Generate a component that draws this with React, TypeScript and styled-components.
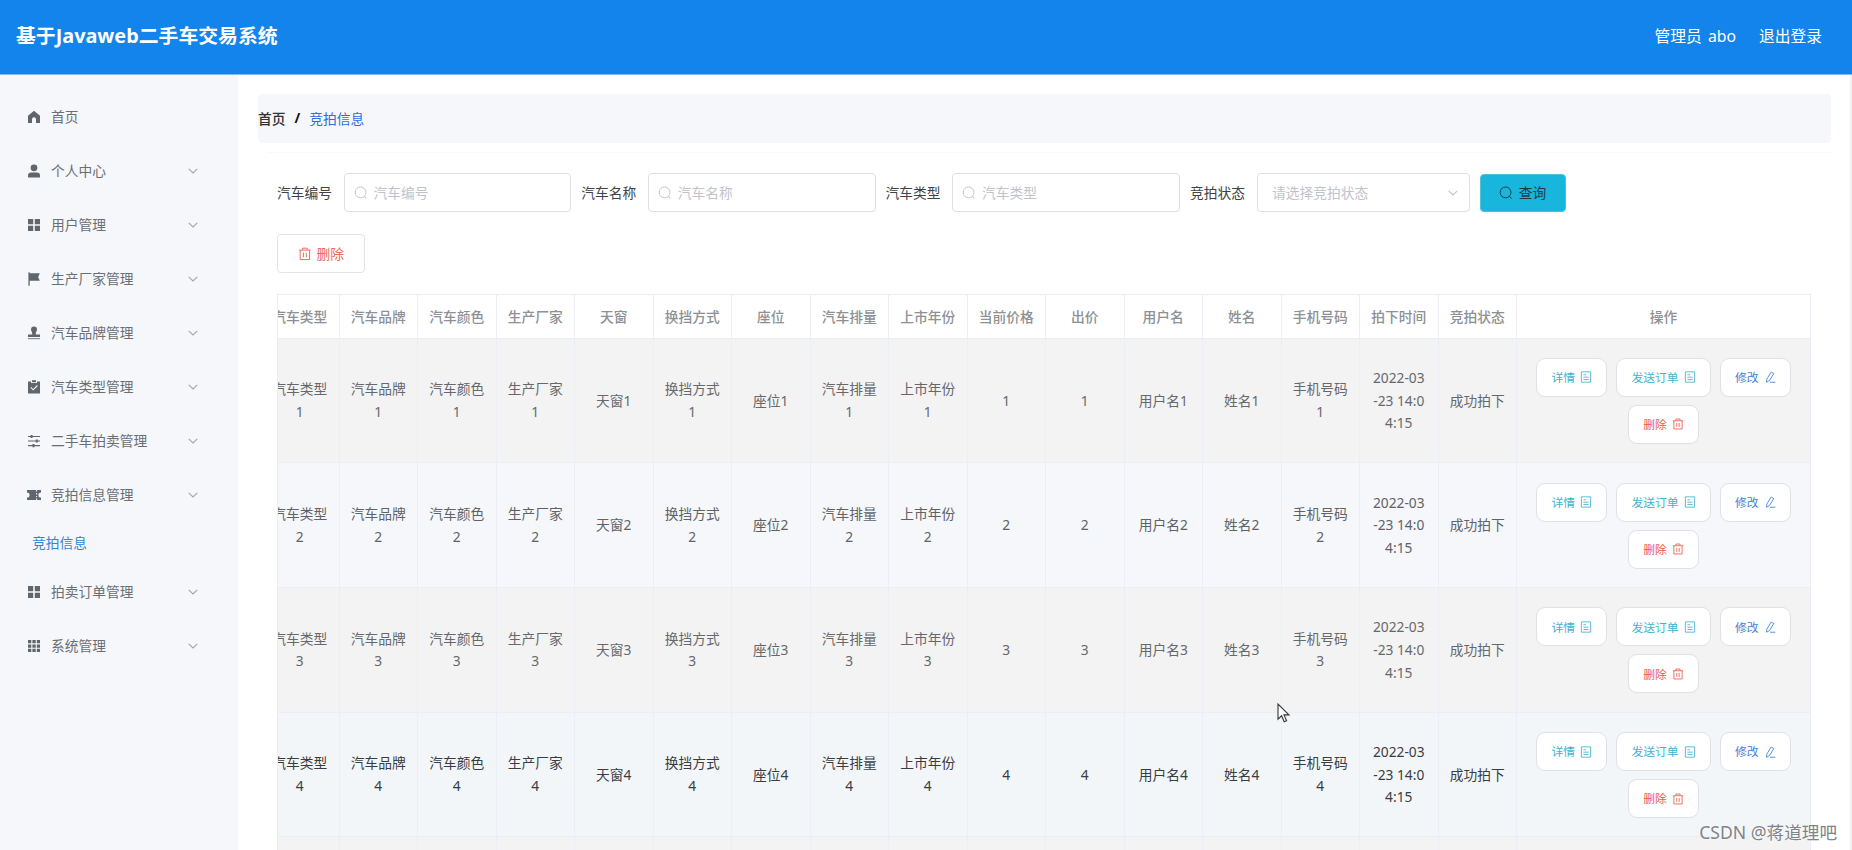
import React from "react";
import styled, { createGlobalStyle } from "styled-components";

const GlobalStyle = createGlobalStyle`
  * { box-sizing: border-box; }
  body {
    margin: 0;
    background: #fff;
    font-family: "Noto Sans", "Noto Sans CJK SC", sans-serif;
    font-size: 13.75px;
    overflow: hidden;
  }
`;

const Page = styled.div`
  position: relative;
  width: 100%;
  height: 850px;
  display: flex;
  flex-direction: column;
  overflow: hidden;
`;

const Header = styled.header`
  flex: none;
  height: 75px;
  padding: 0 30px 3px 16px;
  display: flex;
  align-items: center;
  justify-content: space-between;
  background: #1384eb;
  border-bottom: 1px solid #7fbcf3;
  color: #fff;
`;

const Title = styled.h1`
  margin: 0;
  font-size: 19.85px;
  font-weight: 700;
  line-height: 28px;
  white-space: nowrap;
`;

const UserBar = styled.div`
  display: flex;
  gap: 23px;
  font-size: 15.75px;
  line-height: 24px;
  word-spacing: 2px;
`;

const Body = styled.div`
  flex: 1;
  min-height: 0;
  display: flex;
`;

const Sidebar = styled.nav`
  flex: none;
  width: 238px;
  padding-top: 15px;
  background: #f5f7fb;
`;

const MenuItem = styled.div`
  height: 54px;
  padding: 0 38px 0 27px;
  display: flex;
  align-items: center;
  color: #6b6f73;
`;

const MenuLabel = styled.span`
  flex: 1;
  margin-left: 10px;
  line-height: 20px;
`;

const SubItem = styled.div`
  height: 43px;
  padding: 0 0 3px 32px;
  display: flex;
  align-items: center;
  color: #2f86d8;
`;

const Main = styled.main`
  flex: 1;
  min-width: 0;
  padding: 19px 19px 0 20px;
  border-right: 2px solid #f1f1f2;
`;

const Breadcrumb = styled.div`
  height: 49px;
  padding-bottom: 2px;
  display: flex;
  align-items: center;
  border-radius: 4px;
  background: #f5f7fb;
  color: #303133;
  font-weight: 500;
`;

const Slash = styled.span`
  margin: 0 9px;
  color: #111;
  font-weight: 700;
`;

const Current = styled.span`
  color: #2b6fe0;
  font-weight: 400;
`;

const Content = styled.section`
  margin: 9px 0 0 10px;
  padding: 20px 9px 0;
  border-top: 1px solid #fafafa;
`;

const Filters = styled.div`
  display: flex;
  align-items: center;
  height: 39px;
`;

const Field = styled.div`
  display: flex;
  align-items: center;
  gap: 11.7px;
  margin-right: 10px;
  color: #404346;
`;

const Label = styled.label`
  padding-bottom: 2px;
`;

const InputBox = styled.span<{ $width: number; $left: number; $right: number }>`
  width: ${(p) => p.$width}px;
  height: 39px;
  padding: 0 ${(p) => p.$right}px 0 ${(p) => p.$left}px;
  display: flex;
  align-items: center;
  gap: 6px;
  border: 1px solid #dcdfe6;
  border-radius: 4px;
  background: #fff;
  color: #bfc3cb;
`;

const Placeholder = styled.span`
  flex: 1;
  padding-bottom: 2px;
`;

const ButtonText = styled.span`
  padding-bottom: 2px;
`;

const SearchButton = styled.button`
  width: 86px;
  height: 38px;
  padding: 0;
  display: flex;
  align-items: center;
  justify-content: center;
  gap: 6px;
  border: 1px solid #4cc2dc;
  border-radius: 4px;
  background: #18b6dc;
  color: #1c3b46;
  font: inherit;
`;

const DeleteButton = styled.button`
  width: 88px;
  height: 39px;
  margin-top: 22px;
  padding: 0;
  display: flex;
  align-items: center;
  justify-content: center;
  gap: 5px;
  border: 1px solid #e1e3e9;
  border-radius: 4px;
  background: #fff;
  color: #ee6a5c;
  font: inherit;
`;

const TableView = styled.div`
  width: 1534px;
  height: 556px;
  margin-top: 21px;
  overflow: hidden;
  border: 1px solid #ebeef5;
  border-bottom: 0;
`;

const tones = {
  head: { bg: "#ffffff", fg: "#8d9095" },
  grey: { bg: "#f3f3f3", fg: "#66686c" },
  blue: { bg: "#f5f7fb", fg: "#606266" },
  active: { bg: "#f3f6f9", fg: "#3a3c3f" },
};
type Tone = keyof typeof tones;

const Row = styled.div<{ $tone: Tone; $height: number }>`
  display: grid;
  grid-template-columns: repeat(16, 78.5px) 1fr;
  height: ${(p) => p.$height}px;
  margin-left: -17px;
  background: ${(p) => tones[p.$tone].bg};
  color: ${(p) => tones[p.$tone].fg};
  font-weight: ${(p) => (p.$tone === "head" ? 500 : 400)};
`;

const Cell = styled.div`
  display: flex;
  align-items: center;
  justify-content: center;
  padding-top: 1px;
  border-right: 1px solid #ebeef5;
  border-bottom: 1px solid #ebeef5;
  text-align: center;
  line-height: 22.6px;
  white-space: pre-line;
  &:last-child { border-right: 0; }
`;

const Actions = styled.div`
  display: flex;
  flex-wrap: wrap;
  justify-content: center;
  gap: 8px 8.8px;
  padding: 0 10px;
`;

const ActionButton = styled.button<{ $color: string; $wide?: boolean }>`
  width: ${(p) => (p.$wide ? 94.5 : 71.5)}px;
  height: 39px;
  padding: 0;
  display: flex;
  align-items: center;
  justify-content: center;
  gap: 5px;
  border: 1px solid #dfe1e7;
  border-radius: 9px;
  background: #fff;
  color: ${(p) => p.$color};
  font: inherit;
  font-size: 11.8px;
`;

const Svg = styled.svg`
  flex: none;
  display: block;
  overflow: visible;
`;

const Pointer = styled(Svg)`
  position: absolute;
  left: 1277px;
  top: 703px;
`;

const Watermark = styled.div`
  position: absolute;
  right: 15px;
  bottom: 6px;
  font-size: 17.6px;
  line-height: 24px;
  color: #808387;
  text-shadow: 0 0 2px #fff;
  white-space: nowrap;
`;

const menuIcons: Record<string, React.ReactNode> = {
  home: <path d="M7 .8 13 5.8V13H9V9.2a2 2 0 0 0-4 0V13H1V5.8Z" />,
  user: (
    <>
      <circle cx="7" cy="3.8" r="3.4" />
      <path d="M1 13.4v-2.2C1 9.4 2.4 8.6 4 8.6h6c1.6 0 3 .8 3 2.6v2.2Z" />
    </>
  ),
  grid: <path d="M1 1h5.2v5.2H1ZM7.8 1H13v5.2H7.8ZM1 7.8h5.2V13H1ZM7.8 7.8H13V13H7.8Z" />,
  flag: <path d="M1.4.3h1.3v1h10.1L11.2 5l1.6 3.8H2.7v5H1.4Z" />,
  stamp: (
    <>
      <path d="M7 .6a3 3 0 0 1 3 3c0 1.5-1.3 2.2-1.3 4.8H13v2.5H1V8.4h4.3C5.3 5.800 4 5.100 4 3.600a3 3 0 0 1 3-3Z" />
      <path d="M1 12h12v1.200H1Z" opacity="0.7" />
    </>
  ),
  clipboard: (
    <>
      <path d="M1 1.5h3V3h6V1.5h3v12H1Z" />
      <path d="M5 .2h4v2H5Z" />
      <path d="m3.8 7.4 2.4 2.4 4.2-4.3" fill="none" stroke="#f5f7fb" strokeWidth="1.1" />
    </>
  ),
  sliders: (
    <g fill="none" stroke="currentColor" strokeWidth="1.1">
      <path d="M1 2.500h12M1 7h12M1 11.600h12" />
      <path d="M4.600 1v3M9.800 5.500v3M6.500 10v3.200" strokeWidth="2" />
    </g>
  ),
  ticket: <path d="M0 2h9.1v1.4h1V2H14v2.4a2.6 2.6 0 0 0 0 5.2V12h-3.9v-1.4h-1V12H0V9.6a2.6 2.6 0 0 0 0-5.2ZM9.1 5v1.4h1V5ZM9.1 8v1.2h1V8Z" fillRule="evenodd" />,
  nine: <path d="M1 1h3.3v3.3H1ZM5.4 1h3.3v3.3H5.4ZM9.8 1H13v3.3H9.8ZM1 5.4h3.3v3.3H1ZM5.4 5.4h3.3v3.3H5.4ZM9.8 5.4H13v3.3H9.8ZM1 9.8h3.3V13H1ZM5.4 9.8h3.3V13H5.4ZM9.8 9.8H13V13H9.8Z" />,
};

const MenuIcon = ({ name }: { name: string }) => (
  <Svg width="14" height="14" viewBox="0 0 14 14" fill="currentColor" color="#5f666d">
    {menuIcons[name]}
  </Svg>
);

const Chevron = ({ color }: { color: string }) => (
  <Svg width="14" height="14" viewBox="0 0 14 14" fill="none" stroke={color} strokeWidth="1.1">
    <path d="m2.7 4.8 4.3 4.1 4.3-4.1" />
  </Svg>
);

const SearchIcon = () => (
  <Svg width="13.75" height="13.75" viewBox="0 0 14 14" fill="none" stroke="currentColor" strokeWidth="1">
    <circle cx="6.7" cy="6.5" r="5.5" />
    <path d="m10.6 10.5 2.2 2.3" />
  </Svg>
);

const TrashIcon = ({ size }: { size: number }) => (
  <Svg width={size} height={size} viewBox="0 0 14 14" fill="none" stroke="currentColor" strokeWidth="1">
    <path d="M1 3.2h12M4.6 3V1.2h4.8V3M2.2 3.4v9.4h9.6V3.4M5.6 5.8v4.6M8.4 5.8v4.6" />
  </Svg>
);

const DocIcon = () => (
  <Svg width="12" height="12" viewBox="0 0 14 14" fill="none" stroke="currentColor" strokeWidth="1">
    <path d="M1.6 1h10.8v12H1.6ZM4 4.4h3M4 7.2h6M4 10h6" />
  </Svg>
);

const EditIcon = () => (
  <Svg width="12" height="12" viewBox="0 0 14 14" fill="none" stroke="currentColor" strokeWidth="1">
    <path d="m8.4 1.2 3 1.8-5 8.2-3.5 1.9.4-3.7ZM7 13.1h6.3" />
  </Svg>
);

const menuTop = [
  ["home", "首页"],
  ["user", "个人中心"],
  ["grid", "用户管理"],
  ["flag", "生产厂家管理"],
  ["stamp", "汽车品牌管理"],
  ["clipboard", "汽车类型管理"],
  ["sliders", "二手车拍卖管理"],
  ["ticket", "竞拍信息管理"],
];
const menuBottom = [
  ["grid", "拍卖订单管理"],
  ["nine", "系统管理"],
];

const Menu = ({ items }: { items: string[][] }) => (
  <>
    {items.map(([icon, label]) => (
      <MenuItem key={label}>
        <MenuIcon name={icon} />
        <MenuLabel>{label}</MenuLabel>
        {icon !== "home" && <Chevron color="#a0a4ab" />}
      </MenuItem>
    ))}
  </>
);

const columns = [
  "汽车类型", "汽车品牌", "汽车颜色", "生产厂家", "天窗", "换挡方式", "座位", "汽车排量",
  "上市年份", "当前价格", "出价", "用户名", "姓名", "手机号码", "拍下时间", "竞拍状态",
];

const cellText = (column: string, n: number) => {
  if (column === "拍下时间") return "2022-03\n-23 14:0\n4:15";
  if (column === "竞拍状态") return "成功拍下";
  if (column === "当前价格" || column === "出价") return `${n}`;
  return column.length === 4 ? `${column}\n${n}` : `${column}${n}`;
};

const rows: { n: number; tone: Tone }[] = [
  { n: 1, tone: "grey" },
  { n: 2, tone: "blue" },
  { n: 3, tone: "grey" },
  { n: 4, tone: "active" },
  { n: 5, tone: "grey" },
];

const RowActions = () => (
  <Actions>
    <ActionButton $color="#3fb4cf">详情<DocIcon /></ActionButton>
    <ActionButton $color="#3fb4cf" $wide>发送订单<DocIcon /></ActionButton>
    <ActionButton $color="#3f7fd6">修改<EditIcon /></ActionButton>
    <ActionButton $color="#f05a4e">删除<TrashIcon size={12} /></ActionButton>
  </Actions>
);

export default function App() {
  return (
    <Page>
      <GlobalStyle />
      <Header>
        <Title>基于Javaweb二手车交易系统</Title>
        <UserBar>
          <span>管理员 abo</span>
          <span>退出登录</span>
        </UserBar>
      </Header>
      <Body>
        <Sidebar>
          <Menu items={menuTop} />
          <SubItem>竞拍信息</SubItem>
          <Menu items={menuBottom} />
        </Sidebar>
        <Main>
          <Breadcrumb>
            首页<Slash>/</Slash><Current>竞拍信息</Current>
          </Breadcrumb>
          <Content>
            <Filters>
              {["汽车编号", "汽车名称", "汽车类型"].map((label) => (
                <Field key={label}>
                  <Label>{label}</Label>
                  <InputBox $width={227.6} $left={9} $right={9}>
                    <SearchIcon />
                    <Placeholder>{label}</Placeholder>
                  </InputBox>
                </Field>
              ))}
              <Field>
                <Label>竞拍状态</Label>
                <InputBox $width={213} $left={14.5} $right={9}>
                  <Placeholder>请选择竞拍状态</Placeholder>
                  <Chevron color="#c0c4cc" />
                </InputBox>
              </Field>
              <SearchButton><SearchIcon /><ButtonText>查询</ButtonText></SearchButton>
            </Filters>
            <DeleteButton><TrashIcon size={13.75} /><ButtonText>删除</ButtonText></DeleteButton>
            <TableView>
              <Row $tone="head" $height={43.6}>
                {columns.map((c) => <Cell key={c}>{c}</Cell>)}
                <Cell>操作</Cell>
              </Row>
              {rows.map(({ n, tone }) => (
                <Row key={n} $tone={tone} $height={124.7}>
                  {columns.map((c) => <Cell key={c}>{cellText(c, n)}</Cell>)}
                  <Cell><RowActions /></Cell>
                </Row>
              ))}
            </TableView>
          </Content>
        </Main>
      </Body>
      <Pointer width="14" height="21" viewBox="0 0 14 21">
        <path d="M1 1v15.2l3.6-3.4 2.6 6 2.4-1.1-2.6-5.8h5Z" fill="#fff" stroke="#333" strokeWidth="1.1" />
      </Pointer>
      <Watermark>CSDN @蒋道理吧</Watermark>
    </Page>
  );
}
